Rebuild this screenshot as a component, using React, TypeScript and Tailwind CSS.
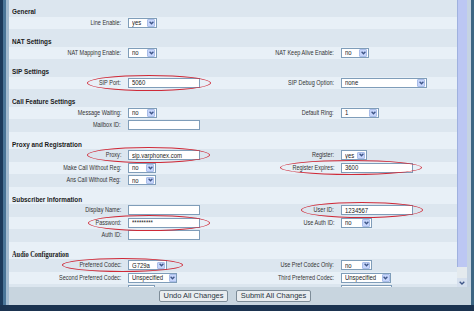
import React from "react";

const labelCls =
  "whitespace-nowrap text-right text-[6.5px] leading-none text-[#333333]";

function Arrow() {
  return (
    <span className="ml-auto mr-[1px] flex h-[7.5px] w-[8px] shrink-0 items-center justify-center rounded-[1px] border border-[#a9bde9] bg-[#c6d5fb]">
      <svg width="5" height="4" viewBox="0 0 5 4">
        <path d="M0.6 0.8 L2.5 2.8 L4.4 0.8" fill="none" stroke="#3f5688" strokeWidth="1.3" />
      </svg>
    </span>
  );
}

function Sel({ w, v }: { w: string; v?: string }) {
  return (
    <div className={`flex h-[10px] items-center overflow-hidden border border-[#7f9db9] bg-white pl-[3px] ${w}`}>
      {v ? (
        <span className="inline-block origin-left scale-x-[0.85] whitespace-nowrap text-[7px] leading-none text-[#222]">
          {v}
        </span>
      ) : null}
      <Arrow />
    </div>
  );
}

function Inp({ v }: { v: string }) {
  return (
    <div className="flex h-[10px] w-[72px] items-center border border-[#7f9db9] bg-white pl-[3px]">
      {v ? (
        <span className="inline-block origin-left scale-x-[0.85] whitespace-nowrap text-[7px] leading-none text-[#222]">
          {v}
        </span>
      ) : null}
    </div>
  );
}

function Lbl({ t, w }: { t?: string; w: string }) {
  return (
    <span className={`flex justify-end ${w} ${labelCls}`}>
      {t ? <span className="inline-block origin-right scale-x-[0.85]">{t}</span> : null}
    </span>
  );
}

function Row({
  dark,
  l,
  lc,
  r,
  rc,
}: {
  dark: boolean;
  l?: string;
  lc?: React.ReactNode;
  r?: string;
  rc?: React.ReactNode;
}) {
  return (
    <div className={`flex h-[12.5px] shrink-0 items-center ${dark ? "bg-[#dce6ef]" : "bg-[#e8f0f7]"}`}>
      <div className="flex w-[228px] items-center">
        <Lbl t={l} w="w-[112px]" />
        <div className="ml-[7px]">{lc}</div>
      </div>
      {rc ? (
        <div className="flex items-center">
          <Lbl t={r} w="w-[97px]" />
          <div className="ml-[7px]">{rc}</div>
        </div>
      ) : null}
    </div>
  );
}

function Head({ t, dark, first, serif }: { t: string; dark: boolean; first?: boolean; serif?: boolean }) {
  return (
    <div
      className={`flex shrink-0 items-start pl-[3px] leading-none ${first ? "h-[16.5px] pt-[8px]" : "h-[17.5px] pt-[9px]"} ${
        dark ? "bg-[#dce6ef]" : "bg-[#e8f0f7]"
      }`}
    >
      <span
        className={`inline-block origin-left scale-x-[0.85] whitespace-nowrap text-[7.5px] font-bold leading-[8px] text-[#1a1a1a] ${
          serif ? "font-['Liberation_Serif',serif]" : ""
        }`}
      >
        {t}
      </span>
    </div>
  );
}

function Ellipse({ cls }: { cls: string }) {
  return <div className={`pointer-events-none absolute rounded-[50%] border-[1.5px] border-[#cf2a38] ${cls}`} />;
}

function Btn({ t, w }: { t: string; w: string }) {
  return (
    <button
      className={`flex h-[12px] items-center justify-center rounded-[2px] border border-[#7d8c98] bg-[#e9edf0] ${w}`}
    >
      <span className="whitespace-nowrap text-[7.5px] leading-none text-[#2a3644]">{t}</span>
    </button>
  );
}

export default function App() {
  return (
    <div className="relative flex h-[311px] w-[474px] flex-col overflow-hidden bg-[#1b3350] font-['Liberation_Sans',Arial,sans-serif]">
      <div className="flex h-[305px] shrink-0">
        {/* left frame */}
        <div className="w-[3px] bg-[#1c3a5b]" />
        <div className="w-[3px] bg-[#4a7598]" />
        <div className="w-[3px] bg-[#a3bbd0]" />

        <div className="flex w-[462px] flex-col">
          <div className="flex h-[287px] shrink-0">
            {/* content */}
            <div className="flex w-[448px] flex-col overflow-hidden">
              <Head t="General" dark first />
              <Row dark={false} l="Line Enable:" lc={<Sel w="w-[29px]" v="yes" />} />

              <Head t="NAT Settings" dark />
              <Row
                dark={false}
                l="NAT Mapping Enable:"
                lc={<Sel w="w-[29px]" v="no" />}
                r="NAT Keep Alive Enable:"
                rc={<Sel w="w-[28px]" v="no" />}
              />

              <Head t="SIP Settings" dark />
              <Row
                dark={false}
                l="SIP Port:"
                lc={<Inp v="5060" />}
                r="SIP Debug Option:"
                rc={<Sel w="w-[86px]" v="none" />}
              />

              <Head t="Call Feature Settings" dark />
              <Row
                dark={false}
                l="Message Waiting:"
                lc={<Sel w="w-[29px]" v="no" />}
                r="Default Ring:"
                rc={<Sel w="w-[38px]" v="1" />}
              />
              <Row dark l="Mailbox ID:" lc={<Inp v="" />} />

              <Head t="Proxy and Registration" dark={false} />
              <Row
                dark
                l="Proxy:"
                lc={<Inp v="sip.varphonex.com" />}
                r="Register:"
                rc={<Sel w="w-[26px]" v="yes" />}
              />
              <Row
                dark={false}
                l="Make Call Without Reg:"
                lc={<Sel w="w-[28px]" v="no" />}
                r="Register Expires:"
                rc={<Inp v="3600" />}
              />
              <Row dark l="Ans Call Without Reg:" lc={<Sel w="w-[28px]" v="no" />} />

              <Head t="Subscriber Information" dark={false} />
              <Row dark l="Display Name:" lc={<Inp v="" />} r="User ID:" rc={<Inp v="1234567" />} />
              <Row
                dark={false}
                l="Password:"
                lc={<Inp v="*********" />}
                r="Use Auth ID:"
                rc={<Sel w="w-[31px]" v="no" />}
              />
              <Row dark l="Auth ID:" lc={<Inp v="" />} />

              <Head t="Audio Configuration" dark={false} serif />
              <Row
                dark
                l="Preferred Codec:"
                lc={<Sel w="w-[39px]" v="G729a" />}
                r="Use Pref Codec Only:"
                rc={<Sel w="w-[31px]" v="no" />}
              />
              <Row
                dark={false}
                l="Second Preferred Codec:"
                lc={<Sel w="w-[49px]" v="Unspecified" />}
                r="Third Preferred Codec:"
                rc={<Sel w="w-[50px]" v="Unspecified" />}
              />
              {/* partially visible next row (clipped by the scroll area) */}
              <Row dark lc={<Sel w="w-[27px]" />} rc={<Sel w="w-[51px]" />} />
            </div>

            {/* scrollbar */}
            <div className="flex w-[14px] shrink-0">
              <div className="flex w-[10px] flex-col">
                <div className="h-[267px] border-l border-[#9fb1df] bg-[#bcc7f3]" />
                <div className="h-[11px] bg-[#e4eaee]" />
                <div className="flex h-[9px] items-center justify-center bg-[#d6e0ee]">
                  <svg width="6" height="4" viewBox="0 0 6 4">
                    <path d="M0.7 0.7 L3 3 L5.3 0.7" fill="none" stroke="#3f5688" strokeWidth="1.3" />
                  </svg>
                </div>
              </div>
              <div className="w-[4px] bg-[#c5d3e2]" />
            </div>
          </div>

          {/* button bar */}
          <div className="flex h-[18px] shrink-0 items-center justify-center gap-[8px] bg-[#c8d5df] pr-[10px]">
            <Btn t="Undo All Changes" w="w-[69px]" />
            <Btn t="Submit All Changes" w="w-[75px]" />
          </div>
        </div>

        {/* right frame */}
        <div className="w-[3px] bg-[#3d6683]" />
      </div>
      <div className="h-[6px] shrink-0 bg-[#1b3350]" />

      {/* red annotation ellipses */}
      <Ellipse cls="left-[87px] top-[75px] h-[16px] w-[124px]" />
      <Ellipse cls="left-[87px] top-[147px] h-[16px] w-[123px]" />
      <Ellipse cls="left-[280px] top-[160px] h-[15px] w-[142px]" />
      <Ellipse cls="left-[301px] top-[202px] h-[16px] w-[122px]" />
      <Ellipse cls="left-[88px] top-[215px] h-[16px] w-[122px]" />
      <Ellipse cls="left-[62px] top-[258px] h-[14px] w-[121px]" />
    </div>
  );
}
